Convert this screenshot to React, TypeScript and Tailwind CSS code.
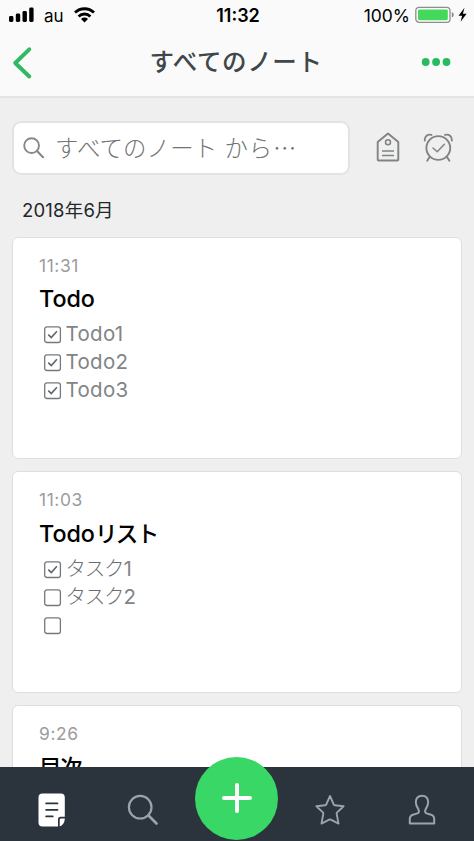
import { Fragment } from 'react';

interface Task {
  label: string;
  done: boolean;
}

interface Note {
  time: string;
  title: string;
  tasks: Task[];
}

const notes: Note[] = [
  {
    time: '11:31',
    title: 'Todo',
    tasks: [
      { label: 'Todo1', done: true },
      { label: 'Todo2', done: true },
      { label: 'Todo3', done: true },
    ],
  },
  {
    time: '11:03',
    title: 'Todoリスト',
    tasks: [
      { label: 'タスク1', done: true },
      { label: 'タスク2', done: false },
      { label: '', done: false },
    ],
  },
  { time: '9:26', title: '目次', tasks: [] },
];

// Japanese runs are set tighter than the latin text around them
function MixedText({ text, tight }: { text: string; tight: string }) {
  return (
    <>
      {text.split(/([\u3040-\u30ff\u4e00-\u9fff]+)/).filter(Boolean).map((run, i) =>
        run.charCodeAt(0) > 0x3000 ? <span key={i} className={tight}>{run}</span> : <Fragment key={i}>{run}</Fragment>
      )}
    </>
  );
}

function StatusBar() {
  return (
    <div className="flex h-[30px] items-center pl-[9px] pr-[7px] text-black">
      <div className="flex flex-1 items-center">
        <svg width="25" height="16" viewBox="0 0 25 16" fill="currentColor">
          <rect x="0" y="9" width="4.4" height="6" rx="1.4" />
          <rect x="6.8" y="6.6" width="4.4" height="8.4" rx="1.4" />
          <rect x="13.5" y="4" width="4.4" height="11" rx="1.4" />
          <rect x="20.2" y="0.5" width="4.4" height="14.5" rx="1.4" />
        </svg>
        <span className="ml-[10px] pt-[1px] text-[17px] leading-[20px]">au</span>
        <svg className="ml-[10px]" width="21" height="16" viewBox="0 0 21 16" fill="none" stroke="currentColor" strokeWidth="2.8">
          <path d="M1 5.6a13.6 13.6 0 0 1 19 0" />
          <path d="M4.6 9.4a8.4 8.4 0 0 1 11.8 0" />
          <path d="M10.5 15.4 7 12a5 5 0 0 1 7 0z" fill="currentColor" stroke="none" />
        </svg>
      </div>
      <span className="pt-[1px] text-[18px] font-semibold leading-[20px]">11:32</span>
      <div className="flex flex-1 items-center justify-end">
        <span className="pt-[1px] text-[17.5px] leading-[20px]">100%</span>
        <svg className="ml-[5px]" width="52" height="18" viewBox="0 0 52 18">
          <rect x="0.8" y="1.3" width="34.2" height="15" rx="3.4" fill="#fff" stroke="#8d8d8d" strokeWidth="1.3" />
          <rect x="3" y="3.4" width="29.8" height="10.8" rx="1.4" fill="#44d85c" />
          <path d="M36.8 6v5.600c1.3-.5 2-1.500 2-2.800s-.7-2.300-2-2.800z" fill="#8d8d8d" />
          <path d="M49.500 1.800 43.500 9.800h3.600l-1.500 6 6-8h-3.700z" fill="#000" />
        </svg>
      </div>
    </div>
  );
}

function Header() {
  return (
    <header className="h-[98px] shrink-0 border-b-2 border-[#e4e4e5] bg-[#fafafa]">
      <StatusBar />
      <div className="flex h-[64px] items-center justify-between pl-[12px] pr-[22px]">
        <svg className="mt-[1px]" width="32" height="34" viewBox="0 0 32 34" fill="none" stroke="#2fb962" strokeWidth="3.900" strokeLinecap="round" strokeLinejoin="round">
          <path d="M17.300 3.300 3.200 17l14.100 13.500" />
        </svg>
        <h1 className="ml-[8px] text-[24.5px] font-medium leading-[36px] tracking-[0.6px] text-[#3f474a]">すべてのノート</h1>
        <svg width="32" height="10" viewBox="0 0 32 10" fill="#27bb5e">
          <circle cx="5.700" cy="5" r="3.900" />
          <circle cx="16.100" cy="5" r="3.900" />
          <circle cx="26.500" cy="5" r="3.900" />
        </svg>
      </div>
    </header>
  );
}

function SearchRow() {
  return (
    <div className="mt-[23px] flex items-center">
      <div className="flex h-[54px] w-[338px] items-center rounded-[9px] border-2 border-[#e3e3e4] bg-white pl-[9px]">
        <svg width="23" height="23" viewBox="0 0 23 23" fill="none" stroke="#87898a" strokeWidth="1.900" strokeLinecap="round">
          <circle cx="8.600" cy="8.600" r="7.400" />
          <path d="m14 14 6 6.200" strokeWidth="2.200" />
        </svg>
        <span className="mb-[3px] ml-[9px] whitespace-nowrap font-['Noto_Sans_CJK_JP',sans-serif] text-[23.4px] font-light leading-[34px] tracking-[0.150px] text-[#717475]">
          すべてのノート <span className="ml-[2px] tracking-[0.800px]">から⋯</span>
        </span>
      </div>
      <svg className="ml-[25px]" width="26" height="32" viewBox="0 0 26 32" fill="none" stroke="#808384" strokeWidth="1.900" strokeLinejoin="round">
        <path d="M13 1.500 23.300 10v17.500q0 1-1 1H3.700q-1 0-1-1V10z" />
        <circle cx="13" cy="10.300" r="2.500" strokeWidth="1.500" />
        <path d="M7 19h12M7 23.500h12" strokeWidth="1.500" />
      </svg>
      <svg className="ml-[21px]" width="32" height="32" viewBox="0 0 32 32" fill="none" stroke="#808384" strokeWidth="1.900" strokeLinecap="round">
        <circle cx="16.300" cy="16" r="11.900" />
        <path d="m11 16 4.200 3.700 7.200-7.500" strokeWidth="1.500" />
        <path d="M2.700 8.500C2.300 4.500 5.800 1.700 9.500 2.900M29.900 8.500c.4-4-3.100-6.800-6.800-5.600M7.600 25l-2.400 3.700M25 25l2.400 3.700" />
      </svg>
    </div>
  );
}

function Checkbox({ done }: { done: boolean }) {
  return (
    <svg className="mt-[1px]" width="18" height="18" viewBox="0 0 18 18" fill="none" stroke="#75787c" strokeWidth="1.300">
      <rect x="0.700" y="0.800" width="15.700" height="15.700" rx="2.300" />
      {done && <path d="m4.300 8.600 3 3 5.600-6.300" stroke="#5f646a" strokeWidth="1.600" />}
    </svg>
  );
}

function NoteCard({ note }: { note: Note }) {
  return (
    <article className="h-[222px] shrink-0 rounded-[6px] border border-[#dededf] bg-white pl-[26px] pt-[17px]">
      <p className="text-[17.4px] leading-[22px] tracking-[0.6px] text-[#9b9c9e]">{note.time}</p>
      <h2 className="mt-[5px] text-[23.3px] font-medium leading-[34px] text-black">
        <MixedText text={note.title} tight="inline-block pt-[1px] text-[22.5px] tracking-[-1.600px]" />
      </h2>
      <ul className="mt-[4px]">
        {note.tasks.map((task, i) => (
          <li key={i} className="flex h-[28px] items-center pl-[5px]">
            <Checkbox done={task.done} />
            <span className="ml-[3.500px] text-[20.5px] leading-[28px] tracking-[0.3px] text-[#828486]">
              <MixedText text={task.label} tight="font-light tracking-[-1.200px] text-[#6c6f71]" />
            </span>
          </li>
        ))}
      </ul>
    </article>
  );
}

function TabBar() {
  return (
    <nav className="relative grid h-[74px] shrink-0 grid-cols-5 items-center justify-items-center bg-[#2b333c] px-[6px] pt-[12px] text-[#9da3ab]">
      <svg width="30" height="36" viewBox="0 0 30 36">
        <path d="M5.500 1.500h18.300a4 4 0 0 1 4 4v19.300h-4.300a2.500 2.500 0 0 0-2.500 2.500v7.200H5.500a4 4 0 0 1-4-4v-25a4 4 0 0 1 4-4z" fill="#fff" />
        <path d="M22.700 34.300v-6.500q0-1.300 1.300-1.300h3.800c0 4-2.300 7.200-5.100 7.800z" fill="#fff" />
        <path d="M9.200 11.400h11.200M9.200 17.900h11.200M9.200 24.400h6.500" stroke="#2b333c" strokeWidth="1.900" strokeLinecap="round" />
      </svg>
      <svg className="mr-[3px]" width="34" height="34" viewBox="0 0 34 34" fill="none" stroke="currentColor" strokeWidth="2.200" strokeLinecap="round">
        <circle cx="14.200" cy="14.200" r="11.300" />
        <path d="m22.500 22.500 8 8" strokeWidth="2.600" />
      </svg>
      <span />
      <svg className="ml-[1px]" width="34" height="34" viewBox="0 0 34 34" fill="none" stroke="currentColor" strokeWidth="1.900" strokeLinejoin="round">
        <path d="m17 3 3.700 8.400q.3.700 1.100.800l8.800 1-6.500 6.200q-.6.600-.4 1.400l1.800 9.800-7.700-3.900q-.8-.4-1.600 0l-7.700 3.900 1.800-9.800q.2-.8-.4-1.400L3.400 13.200l8.800-1q.8-.1 1.100-.8z" />
      </svg>
      <svg width="30" height="34" viewBox="0 0 30 34" fill="none" stroke="currentColor" strokeWidth="2" strokeLinejoin="round">
        <path d="M2.800 30.500v-4.700c0-2.400 1.300-3.600 3.800-4.300l3.200-.9c2.100-.6 2.700-2.200 1.600-4.200-1.600-2.500-2.600-4.600-2.600-7.100 0-3.900 2.300-6.600 6.200-6.600s6.200 2.700 6.200 6.600c0 2.500-1 4.600-2.600 7.100-1.100 2-.5 3.600 1.600 4.200l3.200.9c2.500.7 3.800 1.900 3.800 4.300v4.700z" />
      </svg>
      <button aria-label="新規ノート" className="absolute left-[195px] top-[-10.500px] flex h-[83px] w-[83px] items-center justify-center rounded-full bg-[#39d766]">
        <svg width="32" height="32" viewBox="0 0 32 32" stroke="#fff" strokeWidth="4" strokeLinecap="round">
          <path d="M16 3v26M3 16h26" />
        </svg>
      </button>
    </nav>
  );
}

export default function App() {
  return (
    <div className="flex h-screen w-full flex-col overflow-hidden bg-[#efeff0] font-['Inter','Noto_Sans_CJK_JP',sans-serif]">
      <Header />
      <main className="flex min-h-0 flex-1 flex-col overflow-hidden px-[12px]">
        <SearchRow />
        <h3 className="mb-[13px] mt-[22px] pl-[10px] text-[18.500px] leading-[26px] tracking-[0.2px] text-[#242729]">2018年6月</h3>
        <div className="mt-[1px] flex flex-col gap-[12px]">
          {notes.map((note) => (
            <NoteCard key={note.time} note={note} />
          ))}
        </div>
      </main>
      <TabBar />
    </div>
  );
}
